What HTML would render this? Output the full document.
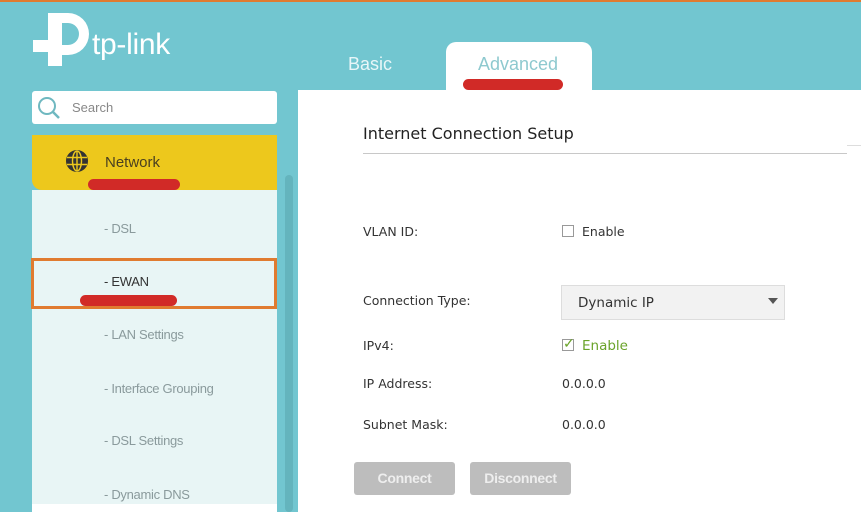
<!DOCTYPE html>
<html><head><meta charset="utf-8"><style>
*{margin:0;padding:0;box-sizing:border-box}
body{width:861px;height:512px;overflow:hidden;background:#72c6d0;font-family:"Liberation Sans",sans-serif;position:relative}
.a{position:absolute}
.lbl{position:absolute;left:363px;color:#333;font-family:"DejaVu Sans","Liberation Sans",sans-serif;font-size:12.5px}
.val{position:absolute;left:562px;font-size:12.5px;color:#333;font-family:"DejaVu Sans","Liberation Sans",sans-serif}
.item{position:absolute;left:104px;font-size:13px;color:#8a9a9c;letter-spacing:-0.3px}
</style></head><body>
<div class="a" style="left:0;top:0;width:861px;height:2px;background:#e07b30"></div>
<!-- logo -->
<svg class="a" style="left:30px;top:10px" width="62" height="60" viewBox="30 10 62 60">
<path fill="#fff" fill-rule="evenodd" d="M48 13 H68 A21 21 0 0 1 68 55 H62 V45 H68 A11 11 0 0 0 68 23 H62 V66 H48 V52 H33 V40 H48 Z"/>
</svg>
<div class="a" style="left:92px;top:28px;font-size:30px;color:#fff;letter-spacing:-0.3px">tp-link</div>
<!-- tabs -->
<div class="a" style="left:348px;top:54px;font-size:18px;color:#e8f6f8">Basic</div>
<div class="a" style="left:446px;top:42px;width:146px;height:60px;background:#fff;border-radius:10px 10px 0 0"></div>
<div class="a" style="left:478px;top:54px;font-size:18px;color:#8ec9cf">Advanced</div>
<div class="a" style="left:463px;top:79px;width:100px;height:11px;background:#d12a27;border-radius:6px"></div>
<!-- content -->
<div class="a" style="left:298px;top:90px;width:563px;height:422px;background:#fff"></div>
<div class="a" style="left:363px;top:124px;color:#222;font-family:'DejaVu Sans','Liberation Sans',sans-serif;font-size:16px">Internet Connection Setup</div>
<div class="a" style="left:363px;top:153px;width:484px;height:1px;background:#c8c8c8"></div>
<div class="a" style="left:847px;top:145px;width:14px;height:1px;background:#ddd"></div>
<div class="lbl" style="top:224px">VLAN ID:</div>
<div class="a" style="left:562px;top:225px;width:12px;height:12px;border:1px solid #999;background:#fff"></div>
<div class="val" style="left:582px;top:224px">Enable</div>
<div class="lbl" style="top:293px">Connection Type:</div>
<div class="a" style="left:561px;top:285px;width:224px;height:35px;background:#f2f2f2;border:1px solid #ddd"></div>
<div class="val" style="left:578px;top:295px;font-size:13.5px">Dynamic IP</div>
<div class="a" style="left:768px;top:298px;width:0;height:0;border-left:5px solid transparent;border-right:5px solid transparent;border-top:6px solid #555"></div>
<div class="lbl" style="top:338px">IPv4:</div>
<div class="a" style="left:562px;top:339px;width:12px;height:12px;border:1px solid #999;background:#fff"></div>
<div class="a" style="left:563px;top:335px;font-size:14px;color:#6aa32a">✓</div>
<div class="val" style="left:582px;top:338px;color:#6aa32a;font-size:13.5px">Enable</div>
<div class="lbl" style="top:376px">IP Address:</div>
<div class="val" style="top:376px">0.0.0.0</div>
<div class="lbl" style="top:417px">Subnet Mask:</div>
<div class="val" style="top:417px">0.0.0.0</div>
<div class="a" style="left:354px;top:462px;width:101px;height:33px;background:#bdbdbd;border-radius:3px;color:#eee;font-size:14px;font-weight:bold;text-align:center;line-height:33px;letter-spacing:-0.3px">Connect</div>
<div class="a" style="left:470px;top:462px;width:101px;height:33px;background:#bdbdbd;border-radius:3px;color:#eee;font-size:14px;font-weight:bold;text-align:center;line-height:33px;letter-spacing:-0.3px">Disconnect</div>
<!-- sidebar -->
<div class="a" style="left:32px;top:91px;width:245px;height:33px;background:#fff;border-radius:3px"></div>
<svg class="a" style="left:36px;top:94px" width="28" height="28" viewBox="0 0 28 28"><circle cx="11" cy="12" r="8" fill="none" stroke="#6fb8c0" stroke-width="2"/><path d="M17 18 L23 24" stroke="#6fb8c0" stroke-width="2.5"/></svg>
<div class="a" style="left:72px;top:100px;font-size:13px;color:#888">Search</div>
<div class="a" style="left:32px;top:190px;width:245px;height:314px;background:#e8f5f5"></div>
<div class="a" style="left:32px;top:504px;width:245px;height:8px;background:#fff"></div>
<div class="a" style="left:285px;top:175px;width:8px;height:337px;background:#64b4bd;border-radius:4px"></div>
<div class="a" style="left:32px;top:135px;width:245px;height:55px;background:#edc81c;border-radius:0 0 0 10px"></div>
<svg class="a" style="left:65px;top:149px" width="24" height="24" viewBox="0 0 24 24"><circle cx="12" cy="12" r="11" fill="#333"/><g stroke="#edc81c" stroke-width="1.4" fill="none"><ellipse cx="12" cy="12" rx="4.5" ry="10"/><path d="M2 8.5h20M2 15.5h20M12 2v20"/></g></svg>
<div class="a" style="left:105px;top:154px;font-size:15px;color:#4a4020">Network</div>
<div class="a" style="left:88px;top:179px;width:92px;height:11px;background:#d12a27;border-radius:6px"></div>
<div class="item" style="top:221px">- DSL</div>
<div class="a" style="left:31px;top:258px;width:246px;height:51px;border:3px solid #e07b30"></div>
<div class="item" style="top:274px;color:#333">- EWAN</div>
<div class="a" style="left:80px;top:295px;width:97px;height:11px;background:#d12a27;border-radius:6px"></div>
<div class="item" style="top:327px">- LAN Settings</div>
<div class="item" style="top:381px">- Interface Grouping</div>
<div class="item" style="top:433px">- DSL Settings</div>
<div class="item" style="top:487px">- Dynamic DNS</div>
</body></html>
